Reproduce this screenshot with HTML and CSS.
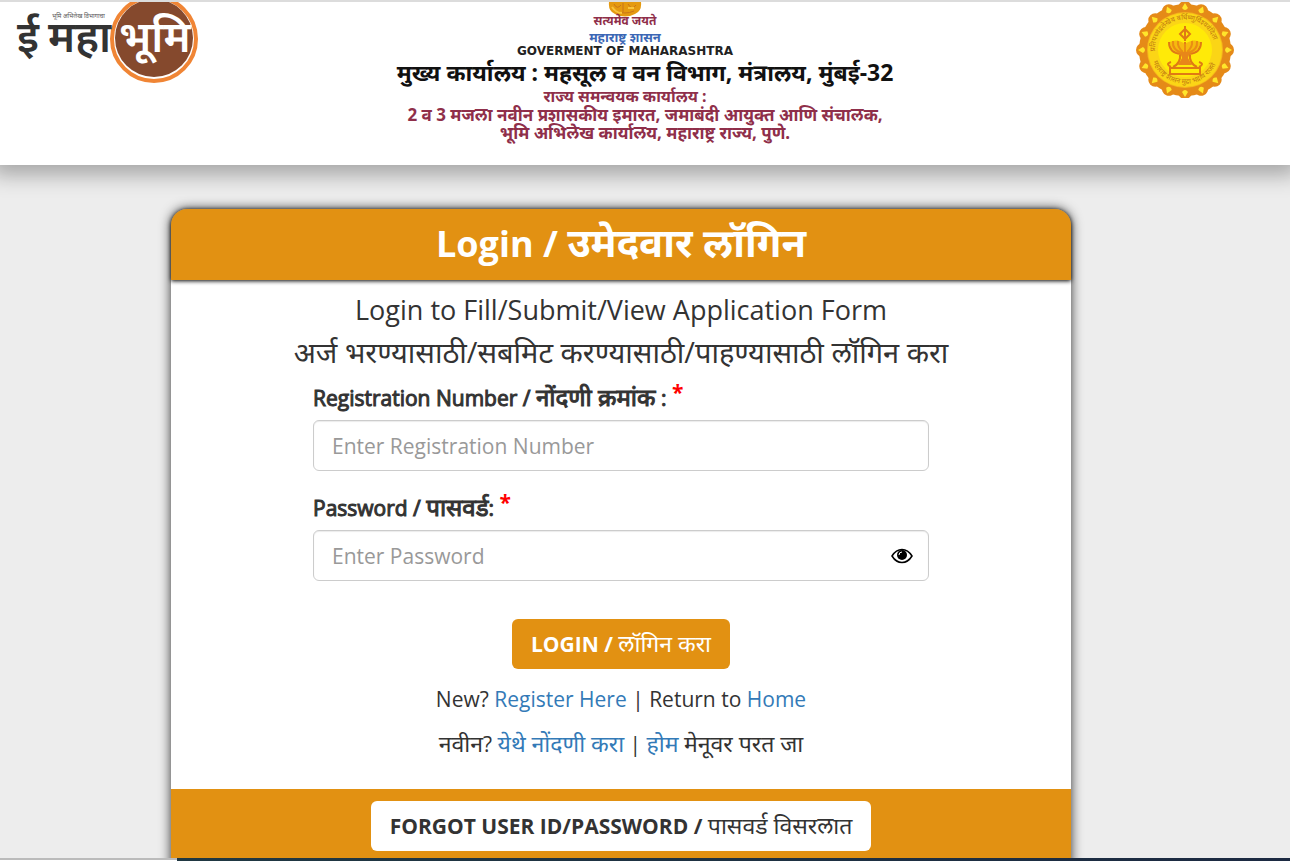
FILE: index.html
```html
<!DOCTYPE html>
<html lang="mr">
<head>
    <meta charset="UTF-8">
    <meta name="viewport" content="width=device-width, initial-scale=1.0">
    <title>Login / उमेदवार लॉगिन</title>
    <link rel="stylesheet" href="styles.css">
</head>
<body>
    <header class="site-header">
        <svg class="logo" width="200" height="90" viewBox="0 0 200 90" role="img" aria-label="ई महाभूमि">
            <circle cx="154" cy="37" r="42" fill="#fff" stroke="#f08535" stroke-width="4"/>
            <circle cx="154" cy="36" r="39" fill="#85492d"/>
            <text class="logo-small" x="52" y="16">भूमि अभिलेख विभागाचा</text>
            <text class="logo-text" x="17" y="50">ई</text>
            <text class="logo-text" x="48" y="50">महा</text>
            <text class="logo-text logo-light" x="119" y="50">भूमि</text>
        </svg>
        <div class="office">
            <div class="office-top">
                <svg class="emblem" width="34" height="15" viewBox="0 0 34 15">
                    <path d="M1 0H33Q34 9 27 12Q17 17 7 12Q0 9 1 0Z" fill="#e59a10"/>
                    <path d="M6 2Q9 8 13 3M15 1V10M20 2Q24 9 28 3M8 9Q17 13 26 9" fill="none" stroke="#c8741a" stroke-width="1"/>
                    <path d="M4 5Q8 11 14 11M20 6H26" fill="none" stroke="#f8c43d" stroke-width="2"/>
                </svg>
                <p class="motto">सत्यमेव जयते</p>
                <p class="state">महाराष्ट्र शासन</p>
                <p class="goverment">GOVERMENT OF MAHARASHTRA</p>
            </div>
            <p class="head-office">मुख्य कार्यालय : महसूल व वन विभाग, मंत्रालय, मुंबई-32</p>
            <p class="co-office">राज्य समन्वयक कार्यालय :</p>
            <p class="address">2 व 3 मजला नवीन प्रशासकीय इमारत, जमाबंदी आयुक्त आणि संचालक,<br>भूमि अभिलेख कार्यालय, महाराष्ट्र राज्य, पुणे.</p>
        </div>
        <svg class="seal" width="100" height="96" viewBox="-50 -48 100 96">
            <defs>
                <g id="petal">
                    <circle cx="0" cy="-42" r="7" fill="#e58a18"/>
                    <path d="M0 -47L3 -42Q0 -38 -3 -42Z" fill="#ffe52b"/>
                </g>
                <g id="petals">
                    <use href="#petal"/>
                    <use href="#petal" transform="rotate(22.5)"/>
                    <use href="#petal" transform="rotate(45)"/>
                    <use href="#petal" transform="rotate(67.5)"/>
                </g>
                <path id="ring" d="M-21 21A30 30 0 1 1 21 21"/>
                <path id="ringBottom" d="M-33 8A34 34 0 0 0 33 8"/>
            </defs>
            <circle r="46" fill="#e58a18"/>
            <use href="#petals"/>
            <use href="#petals" transform="rotate(90)"/>
            <use href="#petals" transform="rotate(180)"/>
            <use href="#petals" transform="rotate(270)"/>
            <circle r="38" fill="#f5b51c"/>
            <circle r="37" fill="#fbd516"/>
            <circle r="27" fill="#ffea08"/>
            <text class="seal-text"><textPath href="#ring" startOffset="22">प्रतिपच्चंद्रलेखेव वर्धिष्णुर्विश्ववंदिता</textPath></text>
            <text class="seal-text"><textPath href="#ringBottom" startOffset="4">महाराष्ट्र शासन मुद्रा भद्राय राजते</textPath></text>
            <g fill="none" stroke="#e07a14" stroke-width="2">
                <path d="M0 -24V-9M-5 -16L0 -21L5 -16L0 -11Z"/>
                <path d="M-16 -8Q-16 3 -4 4M-12 -9Q-13 0 -3 3M-7 -9Q-8 -3 -2 2M16 -8Q16 3 4 4M12 -9Q13 0 3 3M7 -9Q8 -3 2 2M0 -8V12"/>
                <path d="M-5 5Q-4 13 -12 17M5 5Q4 13 12 17M-15 18H15V24H-15ZM-14 17Q-20 14 -14 12M14 17Q20 14 14 12"/>
            </g>
            <path d="M-15 -8Q-8 -12 0 -6Q8 -12 15 -8Q14 2 4 4H-4Q-14 2 -15 -8Z" fill="#f09a12" opacity=".6"/>
            <path d="M-5 2H5L3 8L7 15H-7L-3 8Z" fill="#e88619"/>
        </svg>
    </header>

    <main class="page">
        <div class="login-box">
            <h1>Login / <span class="mr">उमेदवार लॉगिन</span></h1>
            <form class="login-form">
                <p class="intro">Login to Fill/Submit/View Application Form</p>
                <p class="intro intro-mr">अर्ज भरण्यासाठी/सबमिट करण्यासाठी/पाहण्यासाठी लॉगिन करा</p>
                <div class="form-group">
                    <label for="regNumber">Registration Number / <span class="mr">नोंदणी क्रमांक</span> : <span class="star">*</span></label>
                    <input type="text" id="regNumber" placeholder="Enter Registration Number">
                </div>
                <div class="form-group">
                    <label for="password">Password / <span class="mr">पासवर्ड</span>: <span class="star">*</span></label>
                    <div class="password-wrap">
                        <input type="password" id="password" placeholder="Enter Password">
                        <button type="button" class="toggle" aria-label="Show password">
                            <svg width="22" height="16" viewBox="0 0 22 16">
                                <path d="M1 8Q5 1.500 11 1.500T21 8Q17 14.500 11 14.500T1 8Z" fill="#fff" stroke="#000" stroke-width="1.500"/>
                                <circle cx="11" cy="7" r="5" fill="#000"/>
                                <path d="M8 7Q8 4 11 4" fill="none" stroke="#fff" stroke-width="1"/>
                            </svg>
                        </button>
                    </div>
                </div>
                <button type="button" class="btn btn-login"><b>LOGIN /</b> <span class="mr">लॉगिन करा</span></button>
                <p class="links">New? <a href="#">Register Here</a> | Return to <a href="#">Home</a></p>
                <p class="links"><span class="mr">नवीन</span>? <a href="#" class="mr">येथे नोंदणी करा</a> | <a href="#" class="mr">होम</a> <span class="mr">मेनूवर परत जा</span></p>
            </form>
            <div class="login-footer">
                <button type="button" class="btn btn-forgot"><b>FORGOT USER ID/PASSWORD /</b> <span class="mr">पासवर्ड विसरलात</span></button>
            </div>
        </div>
    </main>

    <div class="bottom-bar">
        <div class="status"></div>
        <div class="taskbar"></div>
    </div>
</body>
</html>
```
FILE: styles.css
```css
* {
    box-sizing: border-box;
}
body {
    margin: 0;
    height: 100vh;
    display: flex;
    flex-direction: column;
    overflow: hidden;
    background-color: #ededed;
    color: #333;
    font-family: "Open Sans", "Noto Sans", sans-serif;
    font-size: 21px;
    line-height: 30px;
}
p, h1 {
    margin: 0;
}
a {
    color: #337ab7;
    text-decoration: none;
}
/* marathi words run small next to the latin ones */
.mr {
    font-size: 23px;
    line-height: 1;
}

/* header */
.site-header {
    position: relative;
    display: grid;
    grid-template-columns: 1fr auto 1fr;
    align-items: start;
    height: 165px;
    flex-shrink: 0;
    border-top: 2px solid #dcdcdc;
    background-color: #fff;
    box-shadow: 0 2px 20px 8px rgba(0, 0, 0, 0.3);
}
.logo-text {
    font-family: "Noto Sans", sans-serif;
    font-size: 43px;
    font-weight: 600;
    fill: #333;
}
.logo-light {
    fill: #fff;
}
.logo-small {
    font-size: 6px;
    fill: #555;
}
.office {
    text-align: center;
    font-family: "Noto Sans", sans-serif;
    font-weight: bold;
    color: #8f2f4a;
}
.office-top,
.co-office {
    padding-right: 40px;
}
.emblem {
    display: block;
    margin: 0 auto;
}
.motto {
    font-size: 12px;
    line-height: 8px;
}
.state {
    font-size: 13px;
    line-height: 18px;
    margin-top: 3px;
    color: #3b67b5;
}
.goverment {
    font-family: "DejaVu Sans", sans-serif;
    font-size: 12px;
    line-height: 10px;
    color: #222;
}
.head-office {
    font-size: 23px;
    line-height: 32px;
    color: #111;
}
.co-office {
    font-size: 16px;
    line-height: 16px;
}
.address {
    font-size: 17px;
    line-height: 18px;
    margin-top: 2px;
}
.seal {
    justify-self: end;
    margin-right: 55px;
}
.seal-text {
    font-family: "Noto Sans", sans-serif;
    font-size: 7px;
    fill: #c07812;
}

/* login box */
.page {
    flex: 1;
    min-height: 0;
    padding: 44px 48px 0 0;
    overflow: hidden;
}
.login-box {
    max-width: 900px;
    margin: 0 auto;
    background-color: #fff;
    border-radius: 16px;
    box-shadow: 0 0 12px rgba(0, 0, 0, 0.8);
}
.login-box h1 {
    padding: 8px 0 9px;
    border-radius: 16px 16px 0 0;
    background-color: #e29112;
    box-shadow: 0 1px 4px #000;
    color: #fff;
    font-size: 36px;
    line-height: 54px;
    text-align: center;
}
.login-box h1 .mr {
    font-size: 40px;
}
.login-form {
    display: flex;
    flex-direction: column;
    align-items: center;
    padding: 9px 142px 15px;
}
.intro {
    font-size: 27px;
    line-height: 42px;
    text-align: center;
    white-space: nowrap;
}
.intro-mr {
    margin-bottom: 4px;
    font-size: 29px;
}
.form-group {
    width: 100%;
    margin-bottom: 16px;
}
.form-group label {
    display: block;
    height: 43px;
    line-height: 43px;
    -webkit-text-stroke: 1px #333;
}
.form-group .mr {
    font-size: 24px;
}
.form-group .star {
    color: #f00;
    font-weight: bold;
    line-height: 1;
    vertical-align: 6px;
    -webkit-text-stroke: 0;
}
.form-group input {
    display: block;
    width: 100%;
    height: 51px;
    padding: 0 18px;
    border: 1px solid #ccc;
    border-radius: 6px;
    background-color: #fff;
    box-shadow: inset 0 1px 1px rgba(0, 0, 0, 0.08);
    font-family: inherit;
    font-size: 21px;
}
.form-group input::placeholder {
    color: #999;
}
.password-wrap {
    position: relative;
}
.toggle {
    position: absolute;
    top: 18px;
    right: 16px;
    padding: 0;
    border: none;
    background: none;
    cursor: pointer;
}
.toggle svg {
    display: block;
}
.btn {
    height: 50px;
    padding: 0 19px;
    border: none;
    border-radius: 6px;
    font-family: inherit;
    font-size: 21px;
    cursor: pointer;
}
.btn-login {
    margin: 22px 0 15px;
    background-color: #e29112;
    color: #fff;
}
.links {
    height: 30px;
    margin-bottom: 15px;
}
.login-footer {
    padding: 12px 0 30px;
    background-color: #e29112;
    text-align: center;
}
.btn-forgot {
    background-color: #fff;
    color: #333;
}

/* bottom edge */
.bottom-bar {
    display: flex;
    height: 3px;
    flex-shrink: 0;
    position: relative;
}
.status {
    width: 177px;
    border-top: 2px solid #bbb;
    background-color: #fff;
}
.taskbar {
    flex: 1;
    background: linear-gradient(to right, #203842, #1c2a42);
}
```
